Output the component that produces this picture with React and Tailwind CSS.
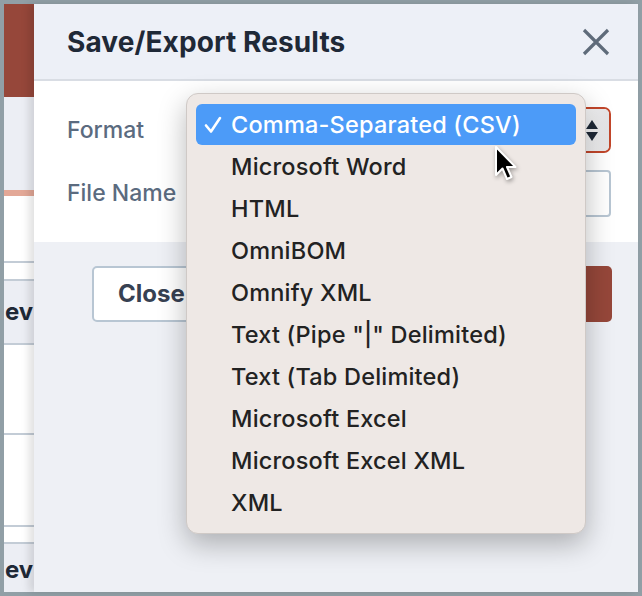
import React from "react";

const formats = [
  "Comma-Separated (CSV)",
  "Microsoft Word",
  "HTML",
  "OmniBOM",
  "Omnify XML",
  'Text (Pipe "|" Delimited)',
  "Text (Tab Delimited)",
  "Microsoft Excel",
  "Microsoft Excel XML",
  "XML",
];

function Cursor() {
  return (
    <svg width="24" height="40" viewBox="0 0 24 40" className="absolute left-[490px] top-[141px] drop-shadow-[1px_2px_2px_rgba(0,0,0,0.35)]">
      <path
        d="M2 2 L2 30 L8.5 23.5 L13 34 L17.5 32 L13 22 L21.5 22 Z"
        fill="#000"
        stroke="#fff"
        strokeWidth="2"
        strokeLinejoin="round"
      />
    </svg>
  );
}

function LeftStrip() {
  return (
    <div className="w-[30px] shrink-0 flex flex-col overflow-hidden text-[24px] font-bold text-[#1f2937]">
      <div className="h-[93px] bg-[#96473a]" />
      <div className="h-[93px] bg-[#eceef4]" />
      <div className="h-[6px] bg-[#e3a897]" />
      <div className="h-[67px] bg-white border-b-2 border-[#c3ccd6]" />
      <div className="h-[18px] bg-white border-b-2 border-[#c3ccd6]" />
      <div className="h-[64px] bg-[#eceef4] border-b-2 border-[#c3ccd6] flex items-center pl-[1px]">ev</div>
      <div className="h-[90px] bg-white border-b-2 border-[#c3ccd6]" />
      <div className="h-[92px] bg-white border-b-2 border-[#c3ccd6]" />
      <div className="h-[17px] bg-white border-b-2 border-[#c3ccd6]" />
      <div className="flex-1 bg-[#eceef4] flex items-end pb-[4px] pl-[1px]">ev</div>
    </div>
  );
}

export default function App() {
  return (
    <div
      className="w-[642px] h-[596px] bg-[#919fa6] p-[4px] overflow-hidden"
      style={{ fontFamily: "Inter, 'Noto Sans', sans-serif" }}
    >
      <div className="relative flex h-full">
        <LeftStrip />
        <div className="flex-1 flex flex-col bg-[#eef0f5] shadow-[-5px_0_8px_rgba(0,0,0,0.12)]">
          {/* header */}
          <div className="h-[77px] bg-[#edf0f7] border-b-2 border-[#d9dde4] flex items-center justify-between pl-[33px] pr-[27px]">
            <h2 className="text-[28px] font-bold text-[#1f2937] tracking-[0.1px]">Save/Export Results</h2>
            <svg width="28" height="28" viewBox="0 0 28 28" className="mr-[1px]">
              <path d="M2 2 L26 26 M26 2 L2 26" stroke="#5f6b7a" strokeWidth="3.2" />
            </svg>
          </div>
          {/* body */}
          <div className="bg-white pt-[26px] pb-[25px] pl-[33px] pr-[27px] flex flex-col gap-[17px]">
            <div className="flex items-center">
              <label className="w-[123px] text-[23px] font-medium text-[#5b6b7f]">Format</label>
              <div className="relative flex-1 h-[46px] rounded-[7px] border-2 border-[#c2462a] bg-white overflow-hidden">
                <div className="absolute right-0 top-0 h-full w-[34px] bg-gradient-to-r from-white to-[#e4e4e6] flex flex-col items-center justify-center gap-[3px]">
                  <div className="w-0 h-0 border-l-[6px] border-r-[6px] border-b-[9px] border-l-transparent border-r-transparent border-b-[#1f2937]" />
                  <div className="w-0 h-0 border-l-[6px] border-r-[6px] border-t-[9px] border-l-transparent border-r-transparent border-t-[#1f2937]" />
                </div>
              </div>
            </div>
            <div className="flex items-center">
              <label className="w-[123px] text-[23px] font-medium text-[#5b6b7f]">File Name</label>
              <div className="flex-1 h-[47px] rounded-[4px] border-2 border-[#b8c6d3] bg-white" />
            </div>
          </div>
          {/* footer */}
          <div className="flex-1 bg-[#eef0f5] pt-[24px] flex items-start pl-[58px] pr-[26px]">
            <button className="w-[120px] h-[56px] rounded-[5px] border-2 border-[#b8c6d3] bg-white text-[24px] font-bold text-[#374152] text-left pl-[24px]">
              Close
            </button>
            <div className="flex-1" />
            <button className="w-[140px] h-[56px] rounded-[5px] bg-[#96473a] text-[24px] font-bold text-white">
              Export
            </button>
          </div>
        </div>

        {/* native dropdown menu */}
        <div className="absolute left-[182px] top-[89px] w-[400px] rounded-[12px] bg-[#eee8e5] border border-[#cfc9c6] shadow-[0_10px_28px_rgba(0,0,0,0.28)] pt-[10px] pb-[9px] px-[9px]">
          {formats.map((f, i) => (
            <div
              key={f}
              className={
                i === 0
                  ? "h-[41px] mb-[1px] rounded-[6px] bg-[#4c9bf8] text-white flex items-center text-[23.5px] font-medium"
                  : "h-[42px] text-[#222222] flex items-center text-[23.5px] font-medium"
              }
            >
              <span className="w-[35px] flex justify-end pr-[9px]">
                {i === 0 && (
                  <svg width="18" height="18" viewBox="0 0 18 18">
                    <path d="M2 9.5 L7 15.5 L16 2" fill="none" stroke="#fff" strokeWidth="2.6" strokeLinecap="round" strokeLinejoin="round" />
                  </svg>
                )}
              </span>
              <span className="tracking-[0.2px]">{f}</span>
            </div>
          ))}
        </div>
        <Cursor />
      </div>
    </div>
  );
}
